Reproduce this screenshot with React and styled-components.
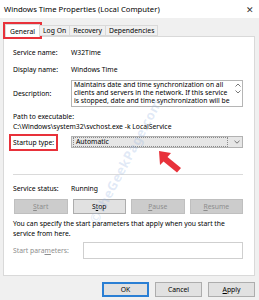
import React from "react";
import styled, { createGlobalStyle } from "styled-components";

const Global = createGlobalStyle`
  body {
    margin: 0;
    background: #f0f0f0;
    font-family: "Noto Sans", "Liberation Sans", sans-serif;
    color: #000;
  }
`;

const Window = styled.div`
  position: relative;
  width: 259px;
  height: 300px;
  background: #f0f0f0;
  display: flex;
  flex-direction: column;
  overflow: hidden;
`;

const TitleBar = styled.div`
  height: 18px;
  background: #fff;
  display: flex;
  align-items: center;
  justify-content: space-between;
  padding: 0 4px 0 4px;
  font-size: 7.7px;
`;

const Close = styled.span`
  font-size: 9px;
  color: #333;
  margin-right: 1px;
`;

const Tabs = styled.div`
  display: flex;
  align-items: flex-end;
  padding: 5px 0 0 5px;
  height: 13px;
  position: relative;
  z-index: 1;
`;

const Tab = styled.div`
  height: ${(p) => (p.$active ? "13px" : "11px")};
  margin-bottom: ${(p) => (p.$active ? "-1px" : "0")};
  padding: 0 ${(p) => (p.$active ? "4px" : "3px")};
  background: ${(p) => (p.$active ? "#fff" : "#f0f0f0")};
  border: 1px solid #d9d9d9;
  border-bottom: ${(p) => (p.$active ? "none" : "1px solid #d9d9d9")};
  margin-left: ${(p) => (p.$active ? "0" : "-1px")};
  font-size: 6.8px;
  display: flex;
  align-items: center;
  box-sizing: border-box;
  outline: ${(p) => (p.$marked ? "2px solid #e8313a" : "none")};
  outline-offset: 0px;
`;

const Panel = styled.div`
  margin: 0 4px 0 3px;
  height: 240px;
  background: #fff;
  border: 1px solid #d9d9d9;
  box-sizing: border-box;
  padding: 10px 11px 0 9px;
  font-size: 6.8px;
  display: flex;
  flex-direction: column;
`;

const Row = styled.div`
  display: grid;
  grid-template-columns: 58px 1fr;
  align-items: ${(p) => p.$align || "center"};
  margin-top: ${(p) => p.$gap || 0}px;
`;

const Label = styled.span`
  color: ${(p) => (p.$muted ? "#8d8d8d" : "#000")};
  justify-self: start;
  outline: ${(p) => (p.$marked ? "2px solid #e8313a" : "none")};
  outline-offset: 2px;
`;

const TextBox = styled.div`
  height: 27px;
  border: 1px solid #b5b5b5;
  box-sizing: border-box;
  padding: 0 10px 0 2px;
  line-height: 8px;
  overflow: hidden;
  position: relative;
`;

const ScrollArrows = styled.div`
  position: absolute;
  right: 1px;
  top: 2px;
  display: flex;
  flex-direction: column;
  gap: 3px;
`;

const Line = styled.div`
  margin-top: ${(p) => p.$gap || 0}px;
  line-height: 10px;
`;

const Select = styled.div`
  height: 12px;
  border: 1px solid #b2b2b2;
  background: #e6e6e6;
  box-sizing: border-box;
  display: flex;
  align-items: center;
  justify-content: space-between;
  padding: 0 2px 0 1px;
`;

const Focus = styled.span`
  flex: 1;
  height: 8px;
  line-height: 8px;
  margin-right: 6px;
  padding-left: 2px;
  border: 1px dotted #8a8a8a;
`;

const Separator = styled.div`
  height: 1px;
  background: #dadada;
  margin-top: 26px;
`;

const ButtonRow = styled.div`
  display: grid;
  grid-template-columns: repeat(4, 1fr);
  gap: 5px;
  margin-top: 6px;
  padding-left: 1px;
`;

const Button = styled.div`
  height: 15px;
  box-sizing: border-box;
  border: 1px solid ${(p) => (p.$disabled ? "#bfbfbf" : "#adadad")};
  background: ${(p) => (p.$disabled ? "#cccccc" : "#e1e1e1")};
  color: ${(p) => (p.$disabled ? "#8c8c8c" : "#000")};
  display: flex;
  align-items: center;
  justify-content: center;
  font-size: 6.8px;
`;

const Input = styled.div`
  height: 17px;
  margin-left: 12px;
  border: 1px solid #cfcfcf;
  box-sizing: border-box;
  background: #fff;
`;

const Footer = styled.div`
  display: flex;
  justify-content: flex-end;
  gap: 6px;
  padding: 6px 4px 0 0;
`;

const DialogButton = styled(Button)`
  width: 47px;
  border: 1px solid ${(p) => (p.$default ? "#2a7fd4" : "#adadad")};
  box-shadow: ${(p) => (p.$default ? "inset 0 0 0 1px #2a7fd4" : "none")};
`;

const Arrow = styled.svg`
  position: absolute;
  left: 157px;
  top: 149px;
`;

const Watermark = styled.div`
  position: absolute;
  left: 56px;
  top: 152px;
  transform: rotate(-62deg);
  font-size: 13px;
  font-weight: 700;
  color: rgba(150, 180, 225, 0.28);
  letter-spacing: 0.5px;
  white-space: nowrap;
`;

const U = styled.u`
  text-decoration: underline;
`;

export default function App() {
  return (
    <Window>
      <Global />
      <TitleBar>
        <span>Windows Time Properties (Local Computer)</span>
        <Close>✕</Close>
      </TitleBar>
      <Tabs>
        <Tab $active $marked>General</Tab>
        <Tab>Log On</Tab>
        <Tab>Recovery</Tab>
        <Tab>Dependencies</Tab>
      </Tabs>
      <Panel>
        <Row $gap={1}>
          <Label>Service name:</Label>
          <span>W32Time</span>
        </Row>
        <Row $gap={8}>
          <Label>Display name:</Label>
          <span>Windows Time</span>
        </Row>
        <Row $gap={6}>
          <Label>Description:</Label>
          <TextBox>
            Maintains date and time synchronization on all clients and servers
            in the network. If this service is stopped, date and time
            synchronization will be
            <ScrollArrows>
              <svg width="6" height="4" viewBox="0 0 6 4">
                <path d="M0.5 3.5 L3 1 L5.5 3.5" fill="none" stroke="#555" strokeWidth="0.8" />
              </svg>
              <svg width="6" height="4" viewBox="0 0 6 4">
                <path d="M0.5 0.5 L3 3 L5.5 0.5" fill="none" stroke="#555" strokeWidth="0.8" />
              </svg>
            </ScrollArrows>
          </TextBox>
        </Row>
        <Line $gap={5}>Path to executable:</Line>
        <Line>C:\Windows\system32\svchost.exe -k LocalService</Line>
        <Row $gap={4}>
          <Label $marked>Startup type:</Label>
          <Select>
            <Focus>Automatic</Focus>
            <svg width="6" height="4" viewBox="0 0 6 4">
              <path d="M0.5 0.8 L3 3.2 L5.5 0.8" fill="none" stroke="#555" strokeWidth="0.8" />
            </svg>
          </Select>
        </Row>
        <Separator />
        <Row $gap={9}>
          <Label>Service status:</Label>
          <span>Running</span>
        </Row>
        <ButtonRow>
          <Button $disabled><U>S</U>tart</Button>
          <Button>S<U>t</U>op</Button>
          <Button $disabled><U>P</U>ause</Button>
          <Button $disabled><U>R</U>esume</Button>
        </ButtonRow>
        <Line $gap={5}>
          You can specify the start parameters that apply when you start the
          service from here.
        </Line>
        <Row $gap={3}>
          <Label $muted>Start para<U>m</U>eters:</Label>
          <Input />
        </Row>
      </Panel>
      <Footer>
        <DialogButton $default>OK</DialogButton>
        <DialogButton>Cancel</DialogButton>
        <DialogButton><U>A</U>pply</DialogButton>
      </Footer>
      <Watermark>©TheGeekPage.com</Watermark>
      <Arrow width="28" height="26" viewBox="0 0 28 26">
        <path d="M2 2 L14 4 L10.5 8 L24 19 L20 23.5 L6.5 12.5 L3 16 Z" fill="#e8323b" />
      </Arrow>
    </Window>
  );
}
